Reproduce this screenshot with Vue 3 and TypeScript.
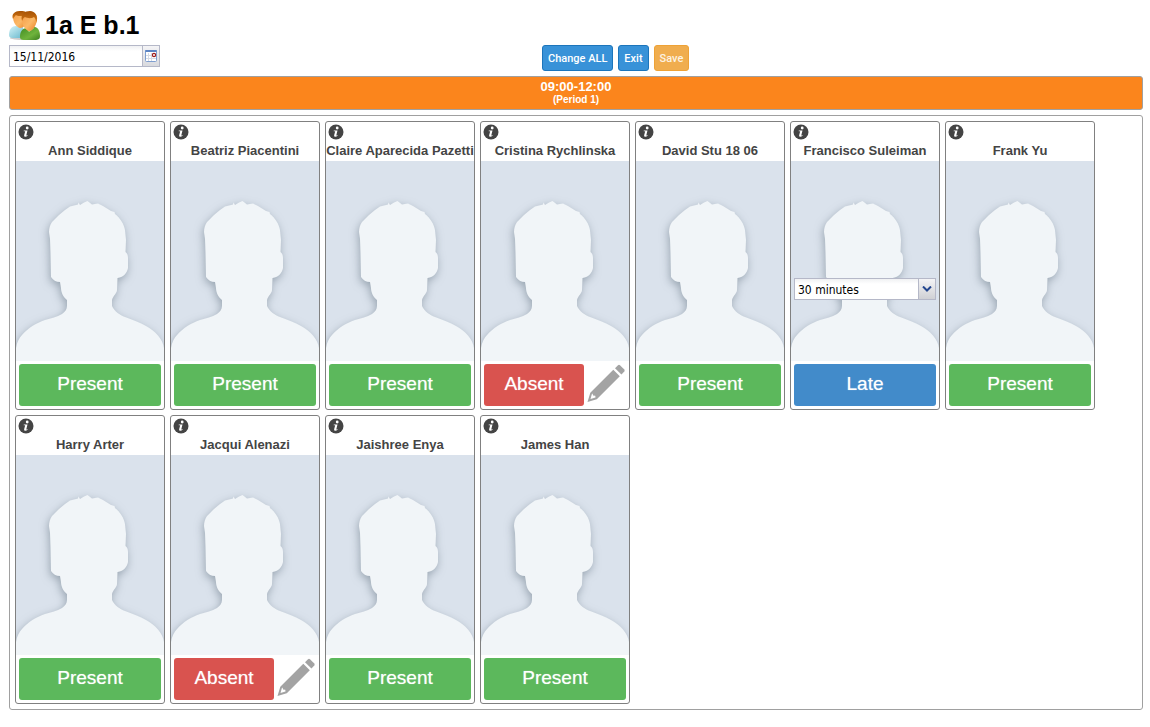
<script setup lang="ts">
import { ref } from 'vue'

type Status = 'Present' | 'Absent' | 'Late'

interface Student {
  name: string
  status: Status
  lateBy?: string
}

const registerDate = ref('15/11/2016')
const delays: string[] = ['5 minutes', '10 minutes', '15 minutes', '30 minutes', '45 minutes']

const students = ref<Student[]>([
  { name: 'Ann Siddique', status: 'Present' },
  { name: 'Beatriz Piacentini', status: 'Present' },
  { name: 'Claire Aparecida Pazetti', status: 'Present' },
  { name: 'Cristina Rychlinska', status: 'Absent' },
  { name: 'David Stu 18 06', status: 'Present' },
  { name: 'Francisco Suleiman', status: 'Late', lateBy: '30 minutes' },
  { name: 'Frank Yu', status: 'Present' },
  { name: 'Harry Arter', status: 'Present' },
  { name: 'Jacqui Alenazi', status: 'Absent' },
  { name: 'Jaishree Enya', status: 'Present' },
  { name: 'James Han', status: 'Present' },
])

const order: Status[] = ['Present', 'Absent', 'Late']

function cycle(student: Student): void {
  student.status = order[(order.indexOf(student.status) + 1) % order.length]
  if (student.status === 'Late' && !student.lateBy) student.lateBy = '5 minutes'
}

function markAll(): void {
  students.value.forEach(cycle)
}
</script>

<template>
  <main class="page">
    <header class="title">
      <svg class="people" viewBox="0 0 32 30" aria-hidden="true">
        <defs>
          <linearGradient id="skin" x1="0" y1="0" x2="1" y2="1">
            <stop offset="0" stop-color="#f49a45" />
            <stop offset="0.55" stop-color="#fbb968" />
            <stop offset="1" stop-color="#e87f20" />
          </linearGradient>
          <linearGradient id="hair" x1="0" y1="0" x2="0" y2="1">
            <stop offset="0" stop-color="#a65204" />
            <stop offset="1" stop-color="#d57a18" />
          </linearGradient>
          <linearGradient id="blue" x1="0" y1="0" x2="1" y2="1">
            <stop offset="0" stop-color="#d4f3f8" />
            <stop offset="1" stop-color="#62b5ca" />
          </linearGradient>
          <linearGradient id="green" x1="0" y1="0" x2="1" y2="1">
            <stop offset="0" stop-color="#3f8a22" />
            <stop offset="0.6" stop-color="#6fb33c" />
            <stop offset="1" stop-color="#3d8020" />
          </linearGradient>
        </defs>
        <ellipse cx="16" cy="27" rx="15" ry="2" fill="#000" opacity="0.2" />
        <path d="M0 24C0 18 3 15 7 15L14 16 16 27H4C1 27 0 26 0 24Z" fill="url(#blue)" />
        <path d="M4 6C4 2 8 0 12 0C17 0 20 3 19 8C18 13 15 17 11 17C7 16 4 11 4 6Z" fill="url(#skin)" />
        <path d="M4 8C2 3 6 0 11 0C14 0 17 0 19 3C15 5 9 6 7 4C6 5 5 6 4 8Z" fill="url(#hair)" />
        <path d="M11 26C11 20 14 17 18 17L26 16C30 17 31 21 31 25C31 28 29 29 26 29H15C12 29 11 28 11 26Z" fill="url(#green)" />
        <path d="M17 17L20 21 25 17Z" fill="#c9dca0" />
        <path d="M13 8C13 3 17 1 21 1C26 1 29 4 28 9C27 15 24 20 20 20C16 19 13 14 13 8Z" fill="url(#skin)" />
        <path d="M13 10C11 3 16 0 21 0C26 0 30 5 27 12C27 10 27 8 25 6C22 8 18 7 16 6C14 7 14 8 13 10Z" fill="url(#hair)" />
      </svg>
      <h1>1a E b.1</h1>
    </header>

    <div class="toolbar">
      <div class="date-field">
        <input v-model="registerDate" type="text" aria-label="Register date" />
        <button type="button" aria-label="Choose date">
          <svg viewBox="0 0 12 12" aria-hidden="true">
            <rect x="0.5" y="0.5" width="11" height="11" rx="1" fill="#fff" stroke="#7f9fd0" />
            <rect x="0" y="0" width="12" height="2" rx="1" fill="#5b84c4" />
            <path d="M3.500 3V11M6.500 3V11M1 5.500H11M1 8.500H11" stroke="#d5dbe6" />
            <circle cx="9" cy="5" r="1.600" fill="#fff" stroke="#9c1c1c" stroke-width="1.200" />
          </svg>
        </button>
      </div>
      <div class="actions">
        <button type="button" class="action" @click="markAll">Change ALL</button>
        <button type="button" class="action">Exit</button>
        <button type="button" class="action save">Save</button>
      </div>
    </div>

    <section class="period">
      <div class="hours">09:00-12:00</div>
      <div class="label">(Period 1)</div>
    </section>

    <section class="register" aria-label="Students">
      <article v-for="student in students" :key="student.name" class="card">
        <div class="head">
          <button type="button" class="info" :aria-label="'Details of ' + student.name">
            <svg viewBox="0 0 16 16" aria-hidden="true">
              <circle cx="8" cy="8" r="7.500" fill="#444" />
              <circle cx="9.200" cy="4" r="1.400" fill="#fff" />
              <path d="M5.800 6.500H9.500L8.300 11.200Q8.200 11.900 9.500 11L9.700 11.500Q8.200 13 6.700 12.700Q5.800 12.400 6.200 11L7.200 7.300H5.700Z" fill="#fff" />
            </svg>
          </button>
          <h2>{{ student.name }}</h2>
        </div>
        <div class="photo">
          <svg viewBox="0 0 148 200" aria-hidden="true">
            <path
              class="figure"
              d="M0 200V187C1 181 3 177 6 174C12 167 20 162 29 159C35 157 41 156 46 153C49 151 51 148 51 145V139C47 136 45 131 45 127L44 121C40 121 37 119 35 116L34.500 92L34 78L33 71C33 67 34 64 36 61L41 56L43 54L49 49L54 45.500L62 43.500L62.500 41.500L64 44L68 41.500L71.500 40L76 43.500L82 42.500L87 45L95 50L98.500 51L99 53C104 57 108 63 109 69L110 79L109.500 91C111 92 112 94 112 97V107C111 112 108 116 101.500 117L101 129C101 132 97 135 96 139V145C98 150 104 154 109 156C117 159 125 162 130 165C139 170 147 178 148 187V200Z"
            />
          </svg>
          <div v-if="student.status === 'Late'" class="delay">
            <select v-model="student.lateBy" :aria-label="'Minutes late for ' + student.name">
              <option v-for="delay in delays" :key="delay">{{ delay }}</option>
            </select>
            <span class="arrow">
              <svg viewBox="0 0 10 6" aria-hidden="true">
                <path d="M1 0.500L5 4.500L9 0.500" fill="none" stroke="#24478f" stroke-width="2" />
              </svg>
            </span>
          </div>
        </div>
        <div class="foot">
          <button type="button" class="status" :class="student.status.toLowerCase()" @click="cycle(student)">
            {{ student.status }}
          </button>
          <button
            v-if="student.status === 'Absent'"
            type="button"
            class="edit"
            :aria-label="'Edit absence of ' + student.name"
          >
            <svg viewBox="0 0 38 38" aria-hidden="true">
              <path
                fill="#a3a3a3"
                fill-rule="evenodd"
                d="M0.500 38L3.300 28.800L26.300 5.800L32.800 12.300L9.800 35.300ZM3.500 35L8.500 33.500L8.300 31.800L6 31.500L5.600 29.500L4.800 30.200Z"
              />
              <path d="M28 4.200L31 1.200Q32 0.500 33 1.200L37.300 5.500Q38 6.500 37.300 7.500L34.400 10.600Z" fill="#a3a3a3" />
            </svg>
          </button>
        </div>
      </article>
    </section>
  </main>
</template>

<style>
body {
  margin: 0;
  background: #fff;
}
</style>

<style scoped>
.page {
  padding: 9px 7px 16px 9px;
  font-family: "Liberation Sans", Arial, sans-serif;
  color: #000;
}

button,
input,
select {
  box-sizing: border-box;
  margin: 0;
  padding: 0;
  font: inherit;
}

button {
  border: 0;
  background: none;
  cursor: pointer;
}

svg {
  display: block;
}

.title {
  display: flex;
  align-items: center;
  gap: 4px;
  height: 33px;
  margin-bottom: 3px;
}

.people {
  width: 32px;
  height: 30px;
}

h1 {
  margin: 0 0 2px;
  font-size: 25px;
  line-height: 30px;
}

.toolbar {
  display: grid;
  grid-template-columns: 47% 1fr;
  align-items: start;
}

.date-field {
  display: flex;
  box-sizing: border-box;
  width: 151px;
  height: 22px;
  border: 1px solid #b5b8c8;
}

.date-field input {
  flex: 1;
  min-width: 0;
  padding: 1px 0 0 3px;
  border: 0;
  background: linear-gradient(#f0f1f3, #fff 5px);
  font-family: "DejaVu Sans Condensed", "Noto Sans", sans-serif;
  font-size: 12px;
}

.date-field button {
  display: grid;
  place-items: center;
  width: 17px;
  border-left: 1px solid #b5b8c8;
  background: linear-gradient(#f4f4f6, #d9dade);
}

.date-field svg {
  width: 12px;
  height: 12px;
}

.actions {
  display: flex;
  gap: 5px;
}

.action {
  height: 26px;
  padding: 0 5px;
  border: 1px solid #1c75bb;
  border-radius: 3px;
  background: #3892d8;
  color: #fff;
  font-family: Roboto, sans-serif;
  font-size: 11px;
  font-weight: 500;
}

.action.save {
  border-color: #eea236;
  background: #f0ad4e;
  color: #fdf3e2;
}

.period {
  margin-top: 5px;
  padding: 3px 0;
  border: 1px solid #a0a0a0;
  border-radius: 3px;
  background: #fb851c;
  color: #fff;
  font-weight: bold;
  text-align: center;
}

.hours {
  font-size: 13px;
  line-height: 14px;
}

.label {
  font-size: 10px;
  line-height: 12px;
}

.register {
  display: flex;
  flex-wrap: wrap;
  gap: 5px;
  margin-top: 5px;
  padding: 5px;
  border: 1px solid #a0a0a0;
  border-radius: 3px;
}

.card {
  box-sizing: border-box;
  width: 150px;
  border: 1px solid #808080;
  border-radius: 3px;
}

.head {
  padding-top: 2px;
}

.info {
  display: block;
  width: 16px;
  height: 16px;
  margin-left: 2px;
}

h2 {
  display: flex;
  justify-content: center;
  margin: 0;
  color: #444;
  font-size: 13px;
  line-height: 21px;
  white-space: nowrap;
}

.photo {
  position: relative;
  overflow: hidden;
  background: #dae2ec;
}

.figure {
  fill: #f1f5f8;
  filter: drop-shadow(-1px 3px 4px rgba(90, 105, 120, 0.5));
}

.delay {
  position: absolute;
  right: 3px;
  bottom: 61px;
  left: 3px;
  display: flex;
  box-sizing: border-box;
  height: 22px;
  border: 1px solid #b5b8c8;
  background: linear-gradient(#f0f1f3, #fff 5px);
}

.delay select {
  flex: 1;
  min-width: 0;
  padding: 1px 0 0 3px;
  border: 0;
  appearance: none;
  background: none;
  color: #000;
  font-family: "DejaVu Sans Condensed", "Noto Sans", sans-serif;
  font-size: 12px;
}

.arrow {
  display: grid;
  place-items: center;
  box-sizing: border-box;
  width: 17px;
  border-left: 1px solid #b5b8c8;
  background: linear-gradient(#f4f4f6, #cfd0d4);
  pointer-events: none;
}

.arrow svg {
  width: 10px;
  height: 6px;
}

.foot {
  display: flex;
  gap: 3px;
  padding: 3px;
}

.status {
  flex: 1;
  height: 42px;
  padding-bottom: 2px;
  border-radius: 3px;
  color: #fff;
  font-size: 19px;
  text-shadow: 0 0 1px rgba(255, 255, 255, 0.6);
}

.present {
  background: #5cb85c;
}

.absent {
  background: #d9534f;
}

.late {
  background: #428bca;
}

.edit {
  display: flex;
  width: 39px;
}

.edit svg {
  width: 38px;
  height: 38px;
}
</style>
